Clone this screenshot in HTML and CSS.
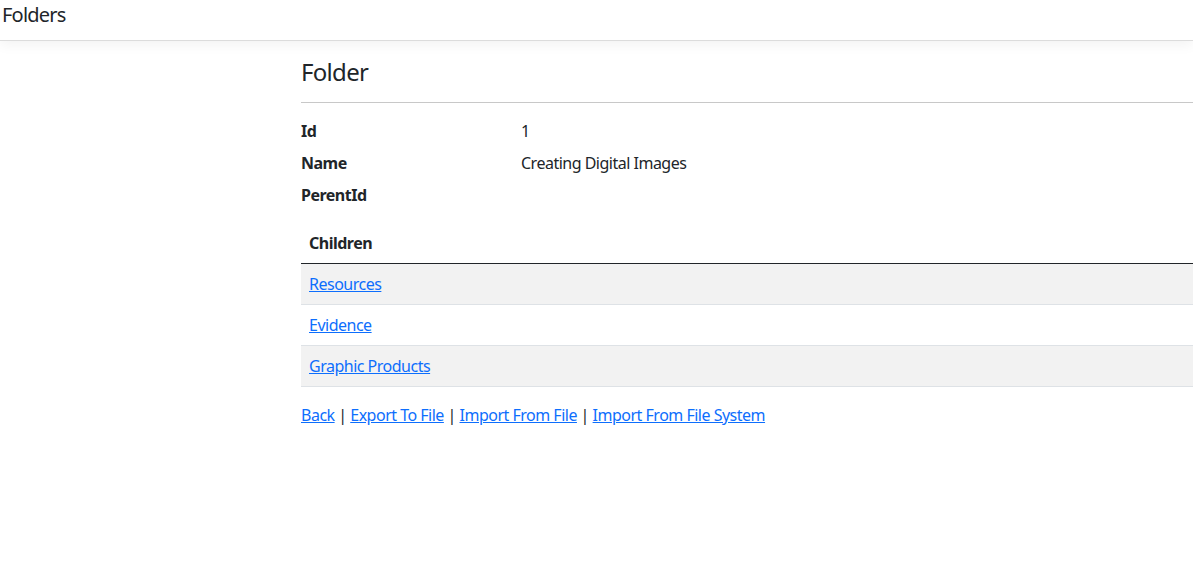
FILE: index.html
```html
<!DOCTYPE html>
<html>
<head>
<meta charset="utf-8">
<link rel="stylesheet" href="styles.css">
</head>
<body>
<header class="navbar">
  <span class="brand">Folders</span>
</header>
<main class="content">
  <h1 class="title">Folder</h1>
  <hr class="rule">
  <dl class="details">
    <dt>Id</dt><dd>1</dd>
    <dt>Name</dt><dd>Creating Digital Images</dd>
    <dt>PerentId</dt><dd></dd>
  </dl>
  <table class="children">
    <thead><tr><th>Children</th></tr></thead>
    <tbody>
      <tr class="odd"><td><a href="#">Resources</a></td></tr>
      <tr><td><a href="#">Evidence</a></td></tr>
      <tr class="odd"><td><a href="#">Graphic Products</a></td></tr>
    </tbody>
  </table>
  <p class="actions"><a href="#">Back</a> | <a href="#">Export To File</a> | <a href="#">Import From File</a> | <a href="#">Import From File System</a></p>
</main>
</body>
</html>
```
FILE: styles.css
```css
html, body {
  margin: 0;
  padding: 0;
  background: #fff;
  color: #212529;
  font-family: "Segoe UI", "Noto Sans", "Open Sans", sans-serif;
  font-size: 16px;
  line-height: 1.5;
  letter-spacing: -0.5px;
}
.navbar {
  height: 40px;
  border-bottom: 1px solid #dcdcdc;
  box-shadow: 0 4px 12px rgba(0,0,0,0.05);
  display: flex;
  align-items: center;
}
.brand {
  font-size: 20px;
  letter-spacing: -0.8px;
  padding-left: 2px;
  margin-top: -11px;
  color: #212529;
}
.content {
  padding-left: 301px;
}
.title {
  font-size: 24px;
  font-weight: 400;
  letter-spacing: -0.7px;
  margin: 0;
  padding-top: 15px;
  line-height: 32px;
}
.rule {
  border: 0;
  border-top: 1px solid #c8c8c8;
  margin: 14px 0 16px;
}
.details {
  display: grid;
  grid-template-columns: 220px 1fr;
  margin: 0 0 8px;
}
.details dt {
  font-weight: 700;
  margin-bottom: 8px;
}
.details dd {
  margin: 0 0 8px;
}
.children {
  width: 100%;
  border-collapse: collapse;
  margin-bottom: 16px;
}
.children th {
  text-align: left;
  font-weight: 700;
  padding: 8px;
  border-bottom: 1px solid #212529;
}
.children td {
  padding: 8px;
  border-bottom: 1px solid #dee2e6;
}
.children tr.odd td {
  background: #f2f2f2;
}
a {
  color: #0d6efd;
  text-decoration: underline;
}
.actions {
  margin: 0;
}
```
